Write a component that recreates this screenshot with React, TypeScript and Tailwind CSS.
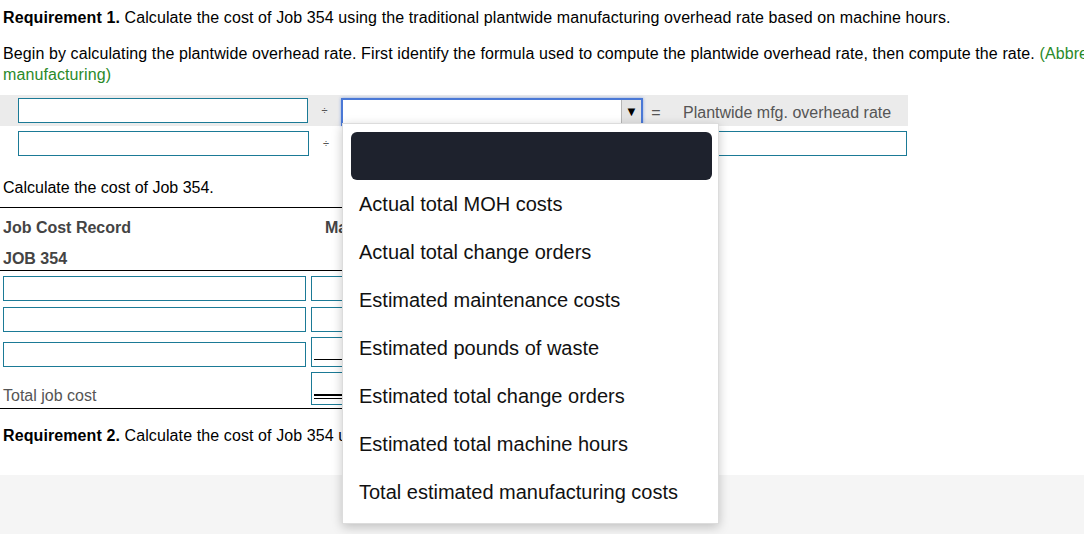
import React from "react";

const teal = "border-[#1b7a96]";

function Box({ className = "" }: { className?: string }) {
  return <div className={`border ${teal} bg-white ${className}`} />;
}

export default function App() {
  const items = [
    "Actual total MOH costs",
    "Actual total change orders",
    "Estimated maintenance costs",
    "Estimated pounds of waste",
    "Estimated total change orders",
    "Estimated total machine hours",
    "Total estimated manufacturing costs",
  ];
  return (
    <div className="relative w-[1084px] h-[534px] overflow-hidden bg-white font-['Liberation_Sans',Arial,sans-serif] text-[16px] text-black">
      <div className="h-[475px]">
        <p className="pl-[3px] pt-[8px] leading-[20px] whitespace-nowrap tracking-[0.1px]">
          <b>Requirement 1.</b> Calculate the cost of Job 354 using the traditional plantwide manufacturing overhead rate based on machine hours.
        </p>
        <p className="pl-[3px] mt-[15px] leading-[21px] whitespace-nowrap tracking-[0.1px]">
          Begin by calculating the plantwide overhead rate. First identify the formula used to compute the plantwide overhead rate, then compute the rate.{" "}
          <span className="text-[#2a8a2a]">(Abbreviation used: mfg =</span>
          <br />
          <span className="text-[#2a8a2a]">manufacturing)</span>
        </p>

        {/* formula row 1 */}
        <div className="mt-[10px] w-[908px] h-[31px] bg-[#ebebeb] flex items-center">
          <Box className="ml-[18px] w-[290px] h-[25px]" />
          <span className="w-[33px] text-center text-[11px] text-[#555]">÷</span>
          <div className="w-[302px] h-[28px] mt-[2px] border-2 border-[#4a78d6] bg-white flex justify-end shadow-[0_0_3px_rgba(74,120,214,0.6)]">
            <div className="w-[20px] h-full bg-[#e3e3e3] border-l border-[#b5b5b5] flex items-center justify-center text-[13px] leading-none">▼</div>
          </div>
          <span className="w-[26px] mt-[4px] text-center text-[#555]">=</span>
          <span className="ml-[14px] mt-[4px] text-[#555] whitespace-nowrap">Plantwide mfg. overhead rate</span>
        </div>

        {/* formula row 2 */}
        <div className="mt-[5px] h-[25px] flex items-center">
          <Box className="ml-[18px] w-[291px] h-[25px]" />
          <span className="w-[34px] text-center text-[11px] text-[#555]">÷</span>
          <Box className="w-[300px] h-[25px]" />
          <span className="w-[40px] text-center text-[#555]">=</span>
          <Box className="w-[224px] h-[25px]" />
        </div>

        <p className="pl-[3px] mt-[22px] leading-[20px]">Calculate the cost of Job 354.</p>

        {/* job cost record */}
        <div className="mt-[9px] w-[600px] border-t border-black">
          <div className="border-b border-black pb-[1px]">
            <div className="pt-[10px] flex font-bold text-[#444] leading-[20px]">
              <span className="pl-[3px] w-[325px]">Job Cost Record</span>
              <span>Manufacturing Overhead</span>
            </div>
            <div className="mt-[11px] pl-[3px] font-bold text-[#444] leading-[20px]">JOB 354</div>
          </div>
          <div className="pl-[3px] pt-[5px] flex flex-col gap-[6px]">
            <div className="flex gap-[5px]">
              <Box className="w-[303px] h-[25px]" />
              <Box className="w-[110px] h-[25px]" />
            </div>
            <div className="flex gap-[5px]">
              <Box className="w-[303px] h-[25px]" />
              <Box className="w-[110px] h-[25px]" />
            </div>
          </div>
          <div className="pl-[3px] mt-[5px] flex gap-[5px] items-end">
            <Box className="w-[303px] h-[25px]" />
            <div className={`w-[110px] h-[30px] border ${teal} flex flex-col justify-end px-[2px] pb-[6px]`}>
              <div className="h-[1.5px] bg-black" />
            </div>
          </div>
          <div className="mt-[5px] flex gap-[5px] items-end pb-[3px] border-b border-black">
            <span className="pl-[3px] w-[306px] text-[#555] leading-[20px] mb-[-1px]">Total job cost</span>
            <div className={`w-[110px] h-[33px] border ${teal} flex flex-col justify-end px-[2px] pb-[5px] gap-[2px]`}>
              <div className="h-[1.5px] bg-black" />
              <div className="h-[1.5px] bg-black" />
            </div>
          </div>
        </div>

        <p className="pl-[3px] mt-[17px] leading-[20px] whitespace-nowrap tracking-[0.1px]">
          <b>Requirement 2.</b> Calculate the cost of Job 354 using activity-based costing.
        </p>
      </div>
      <div className="h-[59px] bg-[#f5f5f5]" />

      {/* dropdown menu */}
      <div className="absolute left-[342px] top-[123px] w-[377px] h-[401px] bg-white border border-[#dcdcdc] shadow-[0_3px_10px_rgba(0,0,0,0.22)] pt-[8px] pl-[8px] pr-[6px]">
        <div className="h-[48px] rounded-[6px] bg-[#1e222d]" />
        <ul>
          {items.map((t) => (
            <li key={t} className="h-[48px] flex items-center pl-[8px] text-[20px] text-[#111] whitespace-nowrap">
              {t}
            </li>
          ))}
        </ul>
      </div>
    </div>
  );
}
